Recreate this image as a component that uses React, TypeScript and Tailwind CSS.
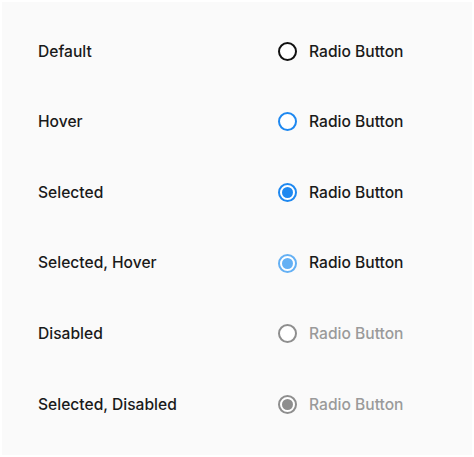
import React from 'react';

type State = 'default' | 'hover' | 'selected' | 'selectedHover' | 'disabled' | 'selectedDisabled';

const rows: { label: string; state: State }[] = [
  { label: 'Default', state: 'default' },
  { label: 'Hover', state: 'hover' },
  { label: 'Selected', state: 'selected' },
  { label: 'Selected, Hover', state: 'selectedHover' },
  { label: 'Disabled', state: 'disabled' },
  { label: 'Selected, Disabled', state: 'selectedDisabled' },
];

function Radio({ state }: { state: State }) {
  const ring = {
    default: 'border-[#111111]',
    hover: 'border-[#1e88f0]',
    selected: 'border-[#1e88f0]',
    selectedHover: 'border-[#64b0f4]',
    disabled: 'border-[#8e8e8e]',
    selectedDisabled: 'border-[#8e8e8e]',
  }[state];
  const dot = {
    default: '',
    hover: '',
    selected: 'bg-[#1e88f0]',
    selectedHover: 'bg-[#64b0f4]',
    disabled: '',
    selectedDisabled: 'bg-[#8e8e8e]',
  }[state];

  return (
    <span className={`flex h-[19px] w-[19px] shrink-0 items-center justify-center rounded-full border-2 bg-white ${ring}`}>
      {dot && <span className={`h-[11px] w-[11px] rounded-full ${dot}`} />}
    </span>
  );
}

export default function App() {
  return (
    <div className="h-[457px] w-[474px] bg-white p-[2px] font-['Inter',sans-serif]">
      <div className="flex h-full w-full flex-col bg-[#fafafa] pt-[14px]">
        {rows.map((row) => {
          const disabled = row.state === 'disabled' || row.state === 'selectedDisabled';
          return (
            <div key={row.label} className="flex h-[70.6px] items-center">
              <div className="w-[276px] shrink-0 pl-[36px] text-[15.6px] font-medium text-[#1a1a1a]">{row.label}</div>
              <div className="flex items-center gap-[12px]">
                <Radio state={row.state} />
                <span className={`text-[15.6px] font-medium ${disabled ? 'text-[#9a9a9a]' : 'text-[#1a1a1a]'}`}>
                  Radio Button
                </span>
              </div>
            </div>
          );
        })}
      </div>
    </div>
  );
}
